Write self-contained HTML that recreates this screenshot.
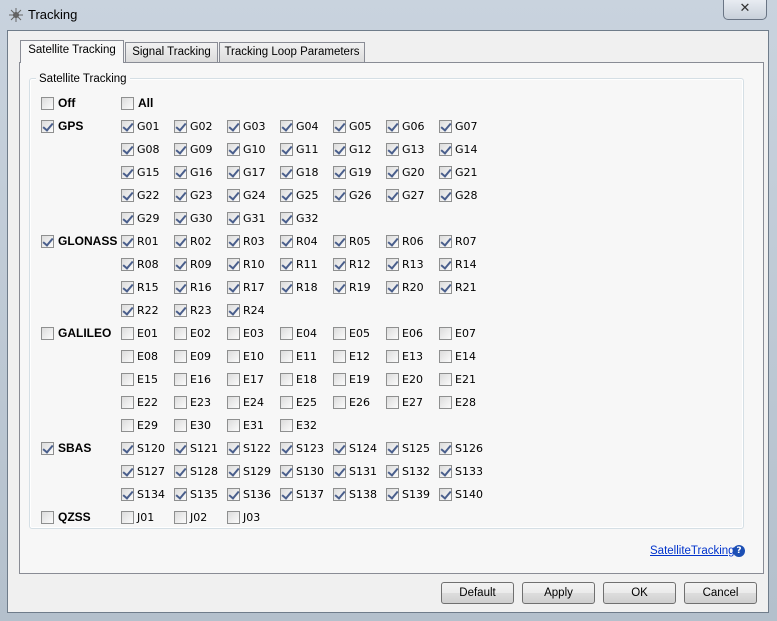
<!DOCTYPE html>
<html><head><meta charset="utf-8"><style>
*{margin:0;padding:0;box-sizing:border-box}
body{width:777px;height:621px;overflow:hidden;background:linear-gradient(#c9d3de,#b4c0cc);font-family:"DejaVu Sans",sans-serif;font-size:11px;color:#000;position:relative}
.a{position:absolute}
.title{left:28px;top:7px;font-family:"Liberation Sans",sans-serif;font-size:13px;color:#000}
.close{left:723px;top:0;width:44px;height:20px;border:1px solid #6a7585;border-top:none;border-radius:0 0 5px 5px;background:linear-gradient(#e8ecf2,#c8d0da);text-align:center;font-size:13px;line-height:18px;color:#333;font-weight:bold}
.client{left:7px;top:30px;width:762px;height:583px;background:#f0f0f0;border:1px solid #6f7c8a}
.tabpanel{left:19px;top:62px;width:745px;height:512px;border:1px solid #898c95;background:#f7f7f7}
.tab{top:42px;height:20px;border:1px solid #898c95;border-bottom:none;background:linear-gradient(#f2f2f2,#dcdcdc);font-family:"Liberation Sans",sans-serif;font-size:11.5px;line-height:18px;text-align:center}
.tab.sel{top:40px;height:23px;background:#f7f7f7;z-index:2}
.group{left:29px;top:78px;width:715px;height:451px;border:1px solid #d5dfe5;border-radius:3px;box-shadow:inset 0 0 0 1px #fff}
.glabel{left:36px;top:73px;background:#f7f7f7;padding:0 3px;font-family:"Liberation Sans",sans-serif;font-size:11.5px}
.r{position:absolute;left:0;height:14px;width:777px}
.c{position:absolute;top:0;width:13px;height:13px;border:1px solid #8e8f8f;background:linear-gradient(135deg,#dcdcdc,#fbfbfb)}
.c.k::after{content:"";position:absolute;left:3px;top:0px;width:4px;height:8px;border:solid #4a5f8c;border-width:0 2px 2px 0;transform:rotate(40deg)}
.t{position:absolute;top:0px;line-height:13px;font-size:11px}
.b{font-weight:bold;font-family:"Liberation Sans",sans-serif;font-size:12px}
.btn{top:582px;width:73px;height:22px;border:1px solid #707070;border-radius:3px;background:linear-gradient(#f2f2f2 0,#ebebeb 50%,#dddddd 51%,#cfcfcf);text-align:center;line-height:20px;font-family:"Liberation Sans",sans-serif;font-size:11.5px}
.link{left:650px;top:545px;color:#0033cc;text-decoration:underline;font-family:"Liberation Sans",sans-serif;font-size:11.5px}
.help{left:733px;top:543px;width:12px;height:12px;border-radius:50%;background:#1c4fb4;color:#fff;font-size:9px;font-weight:bold;text-align:center;line-height:12px}
</style></head><body>
<svg class="a" style="left:8px;top:7px" width="16" height="16" viewBox="0 0 16 16"><circle cx="8" cy="8" r="3" fill="#555"/><path d="M8 1v14M1 8h14M3 3l10 10M13 3L3 13" stroke="#666" stroke-width="1"/></svg>
<div class="a title">Tracking</div>
<div class="a close">✕</div>
<div class="a client"></div>
<div class="a tabpanel"></div>
<div class="a tab sel" style="left:20px;width:104px">Satellite Tracking</div>
<div class="a tab" style="left:125px;width:93px">Signal Tracking</div>
<div class="a tab" style="left:219px;width:146px">Tracking Loop Parameters</div>
<div class="a group"></div>
<div class="a glabel">Satellite Tracking</div>

<div class="r" style="top:97px"><i class="c" style="left:41px"></i><span class="t b" style="left:58px">Off</span><i class="c" style="left:121px"></i><span class="t b" style="left:138px">All</span></div>

<div class="r" style="top:120px"><i class="c k" style="left:41px"></i><span class="t b" style="left:58px">GPS</span>
<i class="c k" style="left:121px"></i><span class="t" style="left:137px">G01</span><i class="c k" style="left:174px"></i><span class="t" style="left:190px">G02</span><i class="c k" style="left:227px"></i><span class="t" style="left:243px">G03</span><i class="c k" style="left:280px"></i><span class="t" style="left:296px">G04</span><i class="c k" style="left:333px"></i><span class="t" style="left:349px">G05</span><i class="c k" style="left:386px"></i><span class="t" style="left:402px">G06</span><i class="c k" style="left:439px"></i><span class="t" style="left:455px">G07</span></div>
<div class="r" style="top:143px"><i class="c k" style="left:121px"></i><span class="t" style="left:137px">G08</span><i class="c k" style="left:174px"></i><span class="t" style="left:190px">G09</span><i class="c k" style="left:227px"></i><span class="t" style="left:243px">G10</span><i class="c k" style="left:280px"></i><span class="t" style="left:296px">G11</span><i class="c k" style="left:333px"></i><span class="t" style="left:349px">G12</span><i class="c k" style="left:386px"></i><span class="t" style="left:402px">G13</span><i class="c k" style="left:439px"></i><span class="t" style="left:455px">G14</span></div>
<div class="r" style="top:166px"><i class="c k" style="left:121px"></i><span class="t" style="left:137px">G15</span><i class="c k" style="left:174px"></i><span class="t" style="left:190px">G16</span><i class="c k" style="left:227px"></i><span class="t" style="left:243px">G17</span><i class="c k" style="left:280px"></i><span class="t" style="left:296px">G18</span><i class="c k" style="left:333px"></i><span class="t" style="left:349px">G19</span><i class="c k" style="left:386px"></i><span class="t" style="left:402px">G20</span><i class="c k" style="left:439px"></i><span class="t" style="left:455px">G21</span></div>
<div class="r" style="top:189px"><i class="c k" style="left:121px"></i><span class="t" style="left:137px">G22</span><i class="c k" style="left:174px"></i><span class="t" style="left:190px">G23</span><i class="c k" style="left:227px"></i><span class="t" style="left:243px">G24</span><i class="c k" style="left:280px"></i><span class="t" style="left:296px">G25</span><i class="c k" style="left:333px"></i><span class="t" style="left:349px">G26</span><i class="c k" style="left:386px"></i><span class="t" style="left:402px">G27</span><i class="c k" style="left:439px"></i><span class="t" style="left:455px">G28</span></div>
<div class="r" style="top:212px"><i class="c k" style="left:121px"></i><span class="t" style="left:137px">G29</span><i class="c k" style="left:174px"></i><span class="t" style="left:190px">G30</span><i class="c k" style="left:227px"></i><span class="t" style="left:243px">G31</span><i class="c k" style="left:280px"></i><span class="t" style="left:296px">G32</span></div>

<div class="r" style="top:235px"><i class="c k" style="left:41px"></i><span class="t b" style="left:58px">GLONASS</span>
<i class="c k" style="left:121px"></i><span class="t" style="left:137px">R01</span><i class="c k" style="left:174px"></i><span class="t" style="left:190px">R02</span><i class="c k" style="left:227px"></i><span class="t" style="left:243px">R03</span><i class="c k" style="left:280px"></i><span class="t" style="left:296px">R04</span><i class="c k" style="left:333px"></i><span class="t" style="left:349px">R05</span><i class="c k" style="left:386px"></i><span class="t" style="left:402px">R06</span><i class="c k" style="left:439px"></i><span class="t" style="left:455px">R07</span></div>
<div class="r" style="top:258px"><i class="c k" style="left:121px"></i><span class="t" style="left:137px">R08</span><i class="c k" style="left:174px"></i><span class="t" style="left:190px">R09</span><i class="c k" style="left:227px"></i><span class="t" style="left:243px">R10</span><i class="c k" style="left:280px"></i><span class="t" style="left:296px">R11</span><i class="c k" style="left:333px"></i><span class="t" style="left:349px">R12</span><i class="c k" style="left:386px"></i><span class="t" style="left:402px">R13</span><i class="c k" style="left:439px"></i><span class="t" style="left:455px">R14</span></div>
<div class="r" style="top:281px"><i class="c k" style="left:121px"></i><span class="t" style="left:137px">R15</span><i class="c k" style="left:174px"></i><span class="t" style="left:190px">R16</span><i class="c k" style="left:227px"></i><span class="t" style="left:243px">R17</span><i class="c k" style="left:280px"></i><span class="t" style="left:296px">R18</span><i class="c k" style="left:333px"></i><span class="t" style="left:349px">R19</span><i class="c k" style="left:386px"></i><span class="t" style="left:402px">R20</span><i class="c k" style="left:439px"></i><span class="t" style="left:455px">R21</span></div>
<div class="r" style="top:304px"><i class="c k" style="left:121px"></i><span class="t" style="left:137px">R22</span><i class="c k" style="left:174px"></i><span class="t" style="left:190px">R23</span><i class="c k" style="left:227px"></i><span class="t" style="left:243px">R24</span></div>

<div class="r" style="top:327px"><i class="c" style="left:41px"></i><span class="t b" style="left:58px">GALILEO</span>
<i class="c" style="left:121px"></i><span class="t" style="left:137px">E01</span><i class="c" style="left:174px"></i><span class="t" style="left:190px">E02</span><i class="c" style="left:227px"></i><span class="t" style="left:243px">E03</span><i class="c" style="left:280px"></i><span class="t" style="left:296px">E04</span><i class="c" style="left:333px"></i><span class="t" style="left:349px">E05</span><i class="c" style="left:386px"></i><span class="t" style="left:402px">E06</span><i class="c" style="left:439px"></i><span class="t" style="left:455px">E07</span></div>
<div class="r" style="top:350px"><i class="c" style="left:121px"></i><span class="t" style="left:137px">E08</span><i class="c" style="left:174px"></i><span class="t" style="left:190px">E09</span><i class="c" style="left:227px"></i><span class="t" style="left:243px">E10</span><i class="c" style="left:280px"></i><span class="t" style="left:296px">E11</span><i class="c" style="left:333px"></i><span class="t" style="left:349px">E12</span><i class="c" style="left:386px"></i><span class="t" style="left:402px">E13</span><i class="c" style="left:439px"></i><span class="t" style="left:455px">E14</span></div>
<div class="r" style="top:373px"><i class="c" style="left:121px"></i><span class="t" style="left:137px">E15</span><i class="c" style="left:174px"></i><span class="t" style="left:190px">E16</span><i class="c" style="left:227px"></i><span class="t" style="left:243px">E17</span><i class="c" style="left:280px"></i><span class="t" style="left:296px">E18</span><i class="c" style="left:333px"></i><span class="t" style="left:349px">E19</span><i class="c" style="left:386px"></i><span class="t" style="left:402px">E20</span><i class="c" style="left:439px"></i><span class="t" style="left:455px">E21</span></div>
<div class="r" style="top:396px"><i class="c" style="left:121px"></i><span class="t" style="left:137px">E22</span><i class="c" style="left:174px"></i><span class="t" style="left:190px">E23</span><i class="c" style="left:227px"></i><span class="t" style="left:243px">E24</span><i class="c" style="left:280px"></i><span class="t" style="left:296px">E25</span><i class="c" style="left:333px"></i><span class="t" style="left:349px">E26</span><i class="c" style="left:386px"></i><span class="t" style="left:402px">E27</span><i class="c" style="left:439px"></i><span class="t" style="left:455px">E28</span></div>
<div class="r" style="top:419px"><i class="c" style="left:121px"></i><span class="t" style="left:137px">E29</span><i class="c" style="left:174px"></i><span class="t" style="left:190px">E30</span><i class="c" style="left:227px"></i><span class="t" style="left:243px">E31</span><i class="c" style="left:280px"></i><span class="t" style="left:296px">E32</span></div>

<div class="r" style="top:442px"><i class="c k" style="left:41px"></i><span class="t b" style="left:58px">SBAS</span>
<i class="c k" style="left:121px"></i><span class="t" style="left:137px">S120</span><i class="c k" style="left:174px"></i><span class="t" style="left:190px">S121</span><i class="c k" style="left:227px"></i><span class="t" style="left:243px">S122</span><i class="c k" style="left:280px"></i><span class="t" style="left:296px">S123</span><i class="c k" style="left:333px"></i><span class="t" style="left:349px">S124</span><i class="c k" style="left:386px"></i><span class="t" style="left:402px">S125</span><i class="c k" style="left:439px"></i><span class="t" style="left:455px">S126</span></div>
<div class="r" style="top:465px"><i class="c k" style="left:121px"></i><span class="t" style="left:137px">S127</span><i class="c k" style="left:174px"></i><span class="t" style="left:190px">S128</span><i class="c k" style="left:227px"></i><span class="t" style="left:243px">S129</span><i class="c k" style="left:280px"></i><span class="t" style="left:296px">S130</span><i class="c k" style="left:333px"></i><span class="t" style="left:349px">S131</span><i class="c k" style="left:386px"></i><span class="t" style="left:402px">S132</span><i class="c k" style="left:439px"></i><span class="t" style="left:455px">S133</span></div>
<div class="r" style="top:488px"><i class="c k" style="left:121px"></i><span class="t" style="left:137px">S134</span><i class="c k" style="left:174px"></i><span class="t" style="left:190px">S135</span><i class="c k" style="left:227px"></i><span class="t" style="left:243px">S136</span><i class="c k" style="left:280px"></i><span class="t" style="left:296px">S137</span><i class="c k" style="left:333px"></i><span class="t" style="left:349px">S138</span><i class="c k" style="left:386px"></i><span class="t" style="left:402px">S139</span><i class="c k" style="left:439px"></i><span class="t" style="left:455px">S140</span></div>

<div class="r" style="top:511px"><i class="c" style="left:41px"></i><span class="t b" style="left:58px">QZSS</span>
<i class="c" style="left:121px"></i><span class="t" style="left:137px">J01</span><i class="c" style="left:174px"></i><span class="t" style="left:190px">J02</span><i class="c" style="left:227px"></i><span class="t" style="left:243px">J03</span></div>

<div class="a link">SatelliteTracking </div>
<div class="a help" style="top:545px">?</div>

<div class="a btn" style="left:441px">Default</div>
<div class="a btn" style="left:522px">Apply</div>
<div class="a btn" style="left:603px">OK</div>
<div class="a btn" style="left:684px">Cancel</div>
</body></html>
